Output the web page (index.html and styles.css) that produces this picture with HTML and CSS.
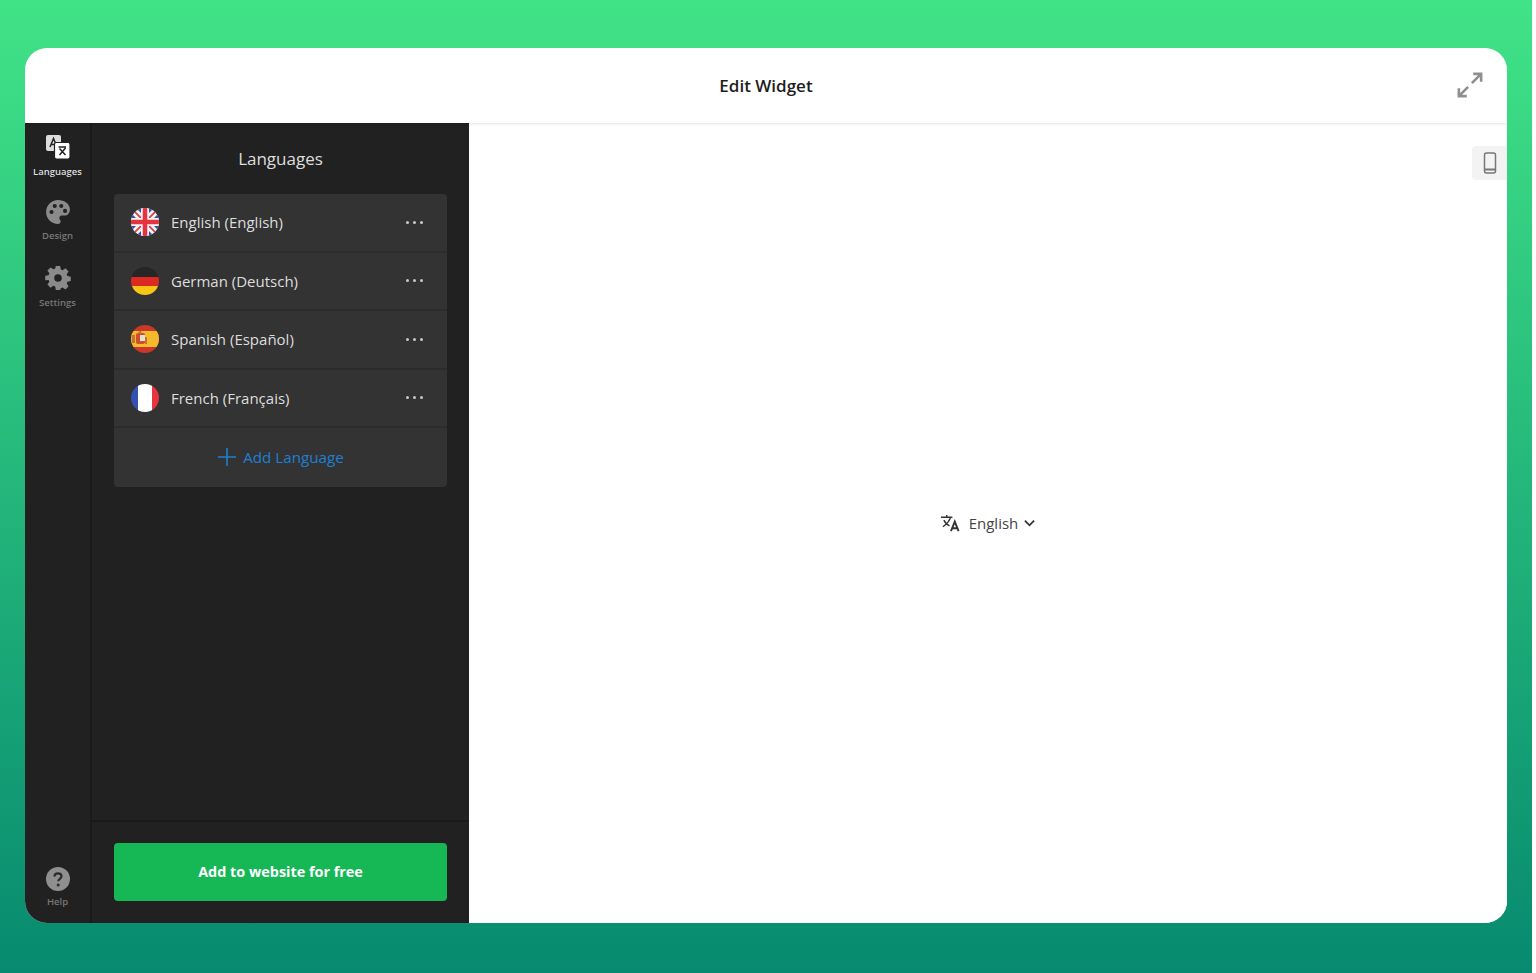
FILE: index.html
```html
<!DOCTYPE html>
<html>
<head>
<meta charset="utf-8">
<title>Edit Widget</title>
<link rel="stylesheet" href="styles.css">
</head>
<body>
  <div class="backdrop">
    <div class="window">
      <header class="topbar">
        <h1>Edit Widget</h1>
        <svg class="expand" width="26" height="26" viewBox="0 0 28 28" fill="none" stroke="#8f8f8f" stroke-width="2.8">
          <path d="M16 12 26 2M17.500 2H26V10.500M12 16 2 26M2 17.500V26H10.500"/>
        </svg>
      </header>
      <div class="main">
        <nav class="rail">
          <a class="rail-item active">
            <svg width="26" height="26" viewBox="0 0 26 26">
              <rect x="1" y="1" width="15" height="16" rx="2" fill="#ddd"/>
              <path d="M5 13 8.500 4.500 12 13M6.300 10.500H10.700" fill="none" stroke="#222" stroke-width="1.500"/>
              <rect x="9.500" y="8.500" width="15.500" height="16.500" rx="2" fill="#fff" stroke="#222" stroke-width="1.200"/>
              <path d="M13.500 13H21M14.500 21 20.500 14M14.500 14.500 20.500 21" fill="none" stroke="#222" stroke-width="1.500"/>
            </svg>
            <span>Languages</span>
          </a>
          <a class="rail-item">
            <svg width="26" height="26" viewBox="0 0 24 24">
              <path fill="#8a8a8a" d="M12 1C6 1 1 5.900 1 12s5 11 11 11c1.400 0 2.400-1 2.400-2.300 0-.6-.2-1.100-.6-1.600-.4-.4-.6-1-.6-1.500 0-1.300 1-2.300 2.300-2.300h2.700C20.500 15.300 23 12.800 23 9.600 23 4.800 18 1 12 1Z"/>
              <circle cx="6" cy="12" r="1.900" fill="#222"/>
              <circle cx="9" cy="6.500" r="1.900" fill="#222"/>
              <circle cx="15" cy="6.500" r="1.900" fill="#222"/>
              <circle cx="18.500" cy="11" r="1.900" fill="#222"/>
            </svg>
            <span>Design</span>
          </a>
          <a class="rail-item">
            <svg width="26" height="26" viewBox="0 0 24 24">
              <path fill="#8a8a8a" fill-rule="evenodd" d="M10 1h4l.6 3.100 1.700.7 2.600-1.800 2.900 2.900-1.800 2.600.7 1.700 3.100.6v4l-3.100.6-.7 1.700 1.800 2.600-2.900 2.900-2.600-1.800-1.700.7L14 23h-4l-.6-3.100-1.700-.7-2.600 1.800-2.900-2.900 1.800-2.600-.7-1.700L.2 14v-4l3.100-.6.7-1.700L2.200 5.100l2.900-2.900 2.600 1.800 1.700-.7L10 1Zm2 7.500a3.500 3.500 0 1 0 0 7 3.500 3.500 0 0 0 0-7Z"/>
            </svg>
            <span>Settings</span>
          </a>
          <a class="rail-item help">
            <svg width="24" height="24" viewBox="0 0 24 24">
              <circle cx="12" cy="12" r="12" fill="#8f8f8f"/>
              <path d="M8.500 9.500C8.500 7.500 10 6.300 12 6.300s3.500 1.200 3.500 3c0 2.500-3.300 2.500-3.300 5" fill="none" stroke="#2a2a2a" stroke-width="2.200"/>
              <circle cx="12.200" cy="18" r="1.500" fill="#2a2a2a"/>
            </svg>
            <span>Help</span>
          </a>
        </nav>

        <aside class="panel">
          <div class="panel-body">
            <h2>Languages</h2>
            <div class="lang-list">
              <div class="lang-row">
                <svg class="flag" viewBox="0 0 28 28">
                  <clipPath id="round"><circle cx="14" cy="14" r="14"/></clipPath>
                  <g clip-path="url(#round)">
                    <rect width="28" height="28" fill="#f4f4f4"/>
                    <path d="M5 0 11 6V0ZM17 0V6L23 0ZM0 5V11H6ZM28 5 22 11H28ZM0 23 6 17H0ZM28 23 22 17H28ZM11 28V22L5 28ZM17 28V22L23 28Z" fill="#2f4fa8"/>
                    <path d="M0 0 28 28M28 0 0 28" stroke="#e5343f" stroke-width="1.600"/>
                    <path d="M14 0V28M0 14H28" stroke="#f4f4f4" stroke-width="8"/>
                    <path d="M14 0V28M0 14H28" stroke="#e5343f" stroke-width="4.500"/>
                  </g>
                </svg>
                <span class="lang-name">English (English)</span>
                <span class="dots"><i></i><i></i><i></i></span>
              </div>
              <div class="lang-row">
                <svg class="flag" viewBox="0 0 28 28">
                  <g clip-path="url(#round)">
                    <rect width="28" height="10" fill="#262626"/>
                    <rect y="10" width="28" height="9" fill="#dc2a22"/>
                    <rect y="19" width="28" height="9" fill="#f7c515"/>
                  </g>
                </svg>
                <span class="lang-name">German (Deutsch)</span>
                <span class="dots"><i></i><i></i><i></i></span>
              </div>
              <div class="lang-row">
                <svg class="flag" viewBox="0 0 28 28">
                  <g clip-path="url(#round)">
                    <rect width="28" height="28" fill="#c9382a"/>
                    <rect y="6" width="28" height="16" fill="#f5b92c"/>
                    <rect x="5" y="8" width="9" height="11" rx="2" fill="#c8502f"/>
                    <rect x="9" y="10" width="5" height="6" fill="#e8ded0"/>
                    <rect x="1" y="10" width="3" height="8" fill="#c8703a"/>
                    <rect x="14" y="12" width="2" height="7" fill="#c8703a"/>
                    <circle cx="9" cy="7.500" r="1.500" fill="#c8703a"/>
                  </g>
                </svg>
                <span class="lang-name">Spanish (Español)</span>
                <span class="dots"><i></i><i></i><i></i></span>
              </div>
              <div class="lang-row">
                <svg class="flag" viewBox="0 0 28 28">
                  <g clip-path="url(#round)">
                    <rect width="10" height="28" fill="#3451b2"/>
                    <rect x="7" width="14" height="28" fill="#fff"/>
                    <rect x="21" width="7" height="28" fill="#e8343c"/>
                  </g>
                </svg>
                <span class="lang-name">French (Français)</span>
                <span class="dots"><i></i><i></i><i></i></span>
              </div>
              <a class="add-lang">
                <svg width="20" height="20" viewBox="0 0 20 20" stroke="#1f7fd1" stroke-width="1.600"><path d="M10 1V19M1 10H19"/></svg>
                Add Language
              </a>
            </div>
          </div>
          <div class="panel-foot">
            <button class="cta">Add to website for free</button>
          </div>
        </aside>

        <section class="preview">
          <button class="device">
            <svg width="14" height="22" viewBox="0 0 14 22" fill="none" stroke="#777" stroke-width="1.500">
              <rect x="1.500" y="1" width="11" height="20" rx="2"/>
              <path d="M1.500 17.500H12.500" stroke-width="2"/>
            </svg>
          </button>
          <div class="picker">
            <svg width="19" height="18" viewBox="0 0 20 18" fill="none" stroke="#333" stroke-width="1.500">
              <path d="M0 3H12M6 0.500V3M2 13C6 10 9 7 10 3M3 6C4.500 9 6.500 11 9 12"/>
              <path d="M10.500 17.500 14.500 7.500 18.500 17.500M12 14.500H17" stroke-width="2"/>
            </svg>
            <span class="picker-label">English</span>
            <svg width="11" height="8" viewBox="0 0 12 8" fill="none" stroke="#333" stroke-width="2"><path d="M1 1.500 6 6.500 11 1.500"/></svg>
          </div>
        </section>
      </div>
    </div>
  </div>
</body>
</html>
```

FILE: styles.css
```css
* {
  box-sizing: border-box;
}

html, body {
  margin: 0;
  height: 100%;
  background: #fff;
}

body {
  font-family: 'Open Sans', 'Noto Sans', sans-serif;
  overflow: hidden;
}

.backdrop {
  width: 1532px;
  height: 973px;
  padding: 48px 25px 50px;
  background: linear-gradient(180deg, #41e387 0%, #078a6f 100%);
}

.window {
  height: 875px;
  display: flex;
  flex-direction: column;
  border-radius: 22px;
  overflow: hidden;
  background: #fff;
}

.topbar {
  height: 75px;
  flex: none;
  display: flex;
  align-items: center;
  justify-content: center;
  position: relative;
  box-shadow: 0 1px 3px rgba(0, 0, 0, 0.1);
  z-index: 1;
}

.topbar h1 {
  margin: 0;
  font-size: 17px;
  font-weight: 600;
  color: #1d1d1d;
}

.expand {
  position: absolute;
  right: 24px;
  top: 24px;
}

.main {
  flex: 1;
  display: flex;
  min-height: 0;
}

.rail {
  width: 67px;
  flex: none;
  display: flex;
  flex-direction: column;
  background: #212121;
  border-right: 2px solid #1a1a1a;
  padding-top: 11px;
}

.rail-item {
  height: 66px;
  display: flex;
  flex-direction: column;
  align-items: center;
  gap: 4px;
  color: #777;
  font-size: 9.500px;
  font-weight: 600;
}

.rail-item.active {
  height: 65px;
  gap: 5px;
  color: #ddd;
}

.rail-item:nth-child(3) {
  gap: 5px;
}

.rail-item.help {
  margin-top: auto;
  height: 54px;
  gap: 4px;
  margin-bottom: 2px;
}

.panel {
  width: 377px;
  flex: none;
  display: flex;
  flex-direction: column;
  background: #212121;
}

.panel-body {
  flex: 1;
  padding: 0 22px;
}

.panel-body h2 {
  margin: 0;
  height: 71px;
  line-height: 71px;
  text-align: center;
  font-size: 17px;
  font-weight: 400;
  color: #ddd;
}

.lang-list {
  background: #333;
  border-radius: 4px;
}

.lang-row {
  height: 58.500px;
  display: flex;
  align-items: center;
  padding: 0 24px 0 17px;
  border-bottom: 2px solid #2c2c2c;
}

.flag {
  width: 28px;
  height: 28px;
  flex: none;
}

.lang-name {
  flex: 1;
  margin-left: 12px;
  font-size: 15px;
  color: #ddd;
}

.dots {
  display: flex;
  gap: 4px;
}

.dots i {
  width: 3px;
  height: 3px;
  border-radius: 50%;
  background: #c8c8c8;
}

.add-lang {
  height: 59px;
  display: flex;
  align-items: center;
  justify-content: center;
  gap: 6px;
  padding-bottom: 1px;
  font-size: 15.200px;
  color: #1f7fd1;
}

.panel-foot {
  height: 103px;
  flex: none;
  padding: 21px 22px 0;
  border-top: 2px solid #1a1a1a;
}

.cta {
  width: 100%;
  height: 58px;
  border: 0;
  border-radius: 4px;
  padding: 0 0 2px;
  background: #16b755;
  color: #fff;
  font-family: inherit;
  font-size: 14.400px;
  font-weight: 700;
}

.preview {
  flex: 1;
  position: relative;
  display: flex;
  align-items: center;
  justify-content: center;
  background: #fff;
}

.device {
  position: absolute;
  top: 23px;
  right: 0;
  width: 35px;
  height: 34px;
  border: 0;
  border-radius: 4px 0 0 4px;
  background: #f3f3f3;
  display: flex;
  align-items: center;
  justify-content: center;
  padding: 0;
}

.picker {
  display: flex;
  align-items: center;
  gap: 6px;
  font-size: 15px;
  color: #444;
}

.picker-label {
  margin-left: 3px;
}
```
